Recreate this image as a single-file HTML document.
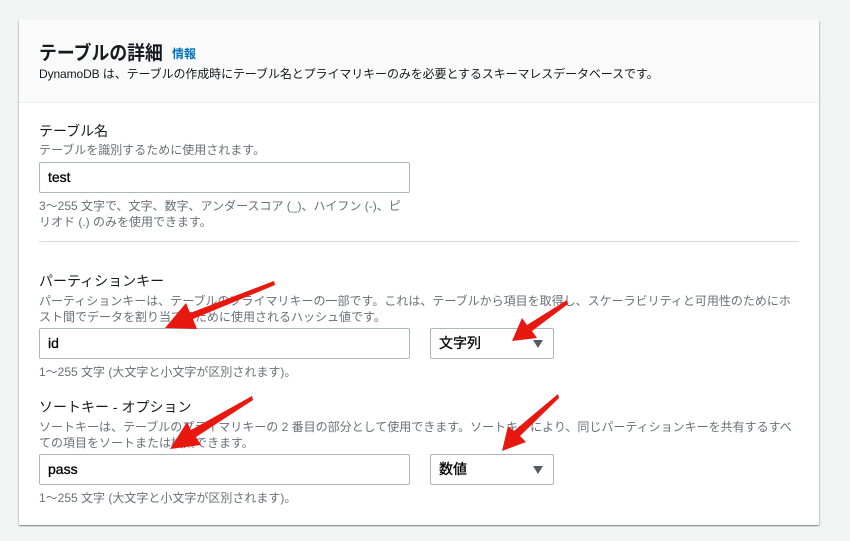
<!DOCTYPE html>
<html><head><meta charset="utf-8"><style>
body{margin:0;width:850px;height:541px;background:#f2f3f3;overflow:hidden;position:relative;font-family:"Liberation Sans","Noto Sans CJK JP",sans-serif;color:#16191f}
.card{position:absolute;left:19px;top:20px;width:800px;height:505px;background:#fff;box-shadow:0 1px 1px rgba(0,28,36,.3),1px 1px 1px rgba(0,28,36,.15),-1px 1px 1px rgba(0,28,36,.15)}
.hdr{position:absolute;left:0;top:0;width:800px;height:82px;background:#fafafa;border-bottom:1px solid #eaeded}
.t{position:absolute;white-space:nowrap}
.h1{font-size:17px;font-weight:bold;left:20px;top:17px;transform:scale(1.05,1.12);transform-origin:left top}
.info{font-size:12px;font-weight:bold;color:#0073bb;left:153px;top:25px}
.d{font-size:12px;color:#16191f;letter-spacing:-0.1px}
.lab{font-size:14px}
.help{font-size:12px;color:#687078}
.inp{position:absolute;border:1px solid #aab7b8;border-radius:2px;box-sizing:border-box;background:#fff;font-size:14px;padding:0 0 0 8px;line-height:28px;color:#000;-webkit-text-stroke:0.3px #000}
.sel::after{content:"";position:absolute;right:10px;top:11px;border-left:5px solid transparent;border-right:5px solid transparent;border-top:8px solid #545b64}
.div{position:absolute;left:20px;top:221px;width:760px;height:1px;background:#d5dbdb}
</style></head><body>
<div class="card">
<div class="hdr"></div>
<div class="t h1">テーブルの詳細</div>
<div class="t info">情報</div>
<div class="t d" style="left:20px;top:45px">DynamoDB は、テーブルの作成時にテーブル名とプライマリキーのみを必要とするスキーマレスデータベースです。</div>

<div class="t lab" style="left:20px;top:101px">テーブル名</div>
<div class="t help" style="left:20px;top:121px">テーブルを識別するために使用されます。</div>
<div class="inp" style="left:20px;top:142px;width:371px;height:31px">test</div>
<div class="t help" style="left:20px;top:177px">3〜255 文字で、文字、数字、アンダースコア (_)、ハイフン (-)、ピ</div>
<div class="t help" style="left:20px;top:193px">リオド (.) のみを使用できます。</div>
<div class="div"></div>

<div class="t lab" style="left:20px;top:251px">パーティションキー</div>
<div class="t help" style="left:20px;top:272px">パーティションキーは、テーブルのプライマリキーの一部です。これは、テーブルから項目を取得し、スケーラビリティと可用性のためにホ</div>
<div class="t help" style="left:20px;top:288px">スト間でデータを割り当てるために使用されるハッシュ値です。</div>
<div class="inp" style="left:20px;top:308px;width:371px;height:31px">id</div>
<div class="inp sel" style="left:411px;top:308px;width:124px;height:31px">文字列</div>
<div class="t help" style="left:20px;top:343px">1〜255 文字 (大文字と小文字が区別されます)。</div>

<div class="t lab" style="left:20px;top:377px">ソートキー - オプション</div>
<div class="t help" style="left:20px;top:398px">ソートキーは、テーブルのプライマリキーの 2 番目の部分として使用できます。ソートキーにより、同じパーティションキーを共有するすべ</div>
<div class="t help" style="left:20px;top:414px">ての項目をソートまたは検索できます。</div>
<div class="inp" style="left:20px;top:434px;width:371px;height:31px">pass</div>
<div class="inp sel" style="left:411px;top:434px;width:124px;height:31px">数値</div>
<div class="t help" style="left:20px;top:469px">1〜255 文字 (大文字と小文字が区別されます)。</div>
</div>
<svg width="850" height="541" style="position:absolute;left:0;top:0">
<g fill="#e8170f">
<path d="M274,281 L275,285 L193,319 L197,329 L165,328 L186,303 L190,313 Z"/>
<path d="M567,300 L568,304 L532,331 L537,338 L512,341 L522,318 L527,325 Z"/>
<path d="M252,396 L253,400 L196,437 L201,445 L170,449 L187,422 L191,430 Z"/>
<path d="M558,394 L559,398 L520,436 L526,442 L502,451 L508,426 L514,431 Z"/>
</g>
</svg>
</body></html>
